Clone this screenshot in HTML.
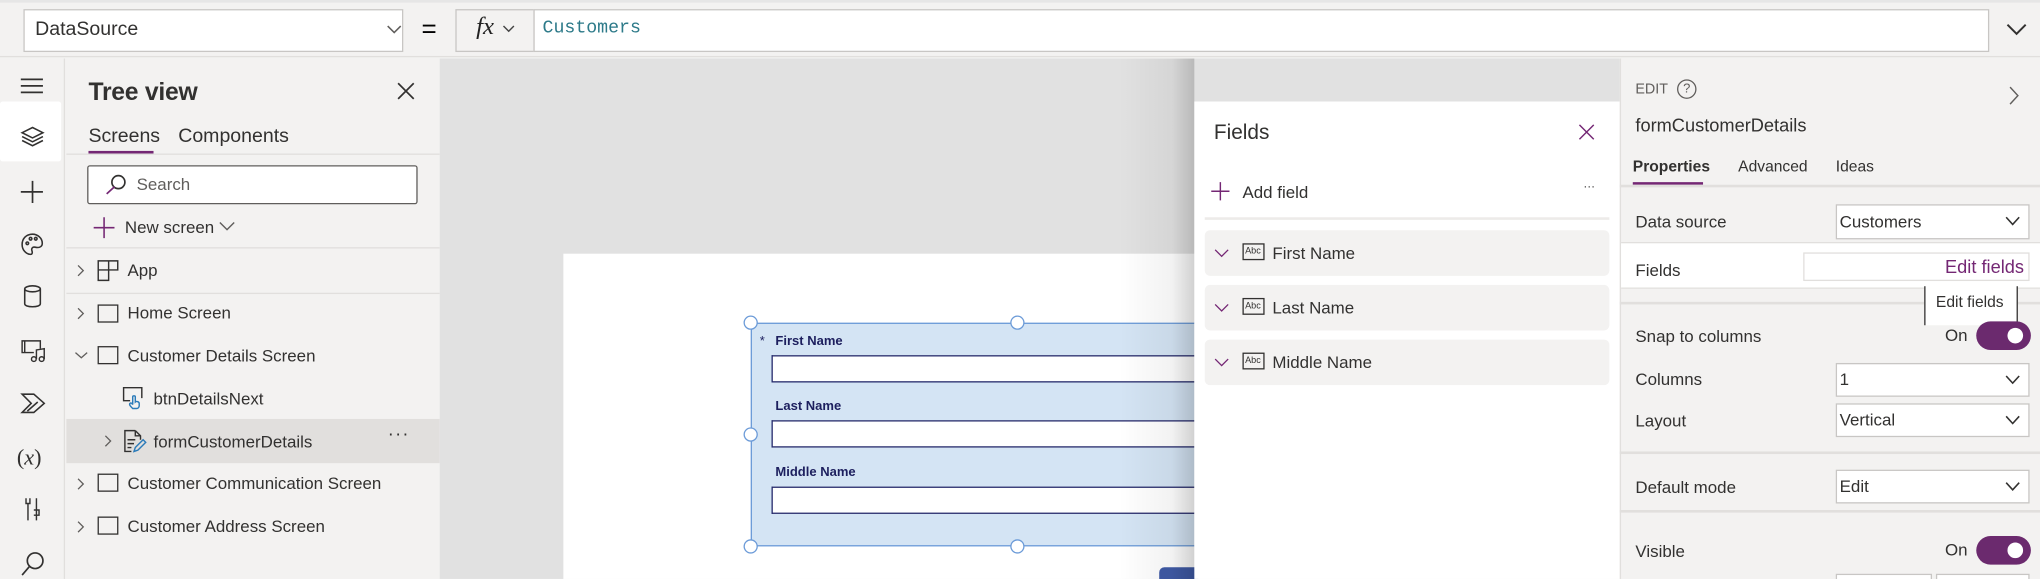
<!DOCTYPE html>
<html><head><meta charset="utf-8">
<style>
*{box-sizing:border-box;margin:0;padding:0}
html,body{width:2040px;height:579px;overflow:hidden;background:#f3f2f1}
#w{position:absolute;left:0;top:0;width:1568px;height:445px;transform:scale(1.30102);transform-origin:0 0;font-family:"Liberation Sans",sans-serif;color:#323130;overflow:hidden}
.a{position:absolute}
.t{position:absolute;white-space:nowrap;line-height:1}
svg{position:absolute;overflow:visible}
.dd{position:absolute;background:#fff;border:1px solid #c8c6c4}
.lbl{font-size:13px;color:#323130}
</style></head><body><div id="w">
<!-- top bar -->
<div class="a" style="left:0;top:0;width:1568px;height:44px;background:#f3f2f1;border-bottom:1px solid #e1dfdd"></div>
<div class="a" style="left:0;top:0;width:1568px;height:2px;background:#e6e6e6"></div>
<div class="a" style="left:18px;top:7px;width:292px;height:33px;background:#fff;border:1px solid #c8c6c4"></div>
<div class="t" style="left:27px;top:15px;font-size:15px;color:#323130">DataSource</div>
<svg style="left:297px;top:19px" width="12" height="8"><path d="M1 1l5 5 5-5" fill="none" stroke="#605e5c" stroke-width="1.2"/></svg>
<div class="t" style="left:324px;top:13px;font-size:20px;color:#000">=</div>
<div class="a" style="left:350px;top:7px;width:61px;height:33px;background:#f3f2f1;border:1px solid #c8c6c4"></div>
<div class="t" style="left:366px;top:11px;font-size:19px;font-style:italic;font-family:'Liberation Serif',serif;color:#222">fx</div>
<svg style="left:386px;top:19px" width="10" height="6"><path d="M1 1l4 4 4-4" fill="none" stroke="#444" stroke-width="1.1"/></svg>
<div class="a" style="left:410px;top:7px;width:1119px;height:33px;background:#fff;border:1px solid #c8c6c4"></div>
<div class="t" style="left:417px;top:15px;font-size:14px;font-family:'Liberation Mono',monospace;color:#2d7a89">Customers</div>
<svg style="left:1542px;top:18px" width="16" height="9"><path d="M1 1l7 7 7-7" fill="none" stroke="#323130" stroke-width="1.5"/></svg>
<!-- left rail -->
<div class="a" style="left:0;top:45px;width:50px;height:400px;background:#f3f2f1;border-right:1px solid #e1dfdd"></div>
<div class="a" style="left:0;top:78px;width:47px;height:46px;background:#fff;border-radius:2px"></div>
<svg style="left:16px;top:60px" width="18" height="14"><path d="M0 1h17M0 6h17M0 11h17" stroke="#323130" stroke-width="1.3"/></svg>
<svg style="left:16px;top:97px" width="18" height="16" fill="none" stroke="#323130" stroke-width="1.2"><path d="M9 1l8 4-8 4-8-4z"/><path d="M1 8l8 4 8-4M1 11l8 4 8-4"/></svg>
<svg style="left:16px;top:139px" width="18" height="18"><path d="M9 0v17M0 8.5h17" stroke="#323130" stroke-width="1.3"/></svg>
<svg style="left:16px;top:179px" width="18" height="18" fill="none" stroke="#323130" stroke-width="1.2"><path d="M9 1C4 1 1 4.5 1 9c0 4 3 7.5 6.5 7.5 1.5 0 1.5-1.5 1-3s.5-3 2.5-2.5 5.5.5 5.5-3C16.5 4 13 1 9 1z"/><circle cx="5" cy="8" r="1"/><circle cx="7.5" cy="4.5" r="1"/><circle cx="11.5" cy="4.5" r="1"/></svg>
<svg style="left:18px;top:219px" width="14" height="18" fill="none" stroke="#323130" stroke-width="1.2"><ellipse cx="7" cy="3" rx="6" ry="2.3"/><path d="M1 3v11.5c0 1.5 2.7 2.3 6 2.3s6-.8 6-2.3V3"/></svg>
<svg style="left:16px;top:261px" width="20" height="18" fill="none" stroke="#323130" stroke-width="1.1"><path d="M10 10H1V1h14v6M3 1v9"/><circle cx="10" cy="15" r="1.8"/><circle cx="16" cy="15" r="1.8"/><path d="M12 15V8l6-1v8"/></svg>
<svg style="left:16px;top:302px" width="19" height="16" fill="none" stroke="#323130" stroke-width="1.2"><path d="M1 1h9l8 7-8 7H1l7-7z"/><path d="M5 14l8-7"/></svg>
<div class="t" style="left:13px;top:343px;font-size:17px;font-family:'Liberation Serif',serif;color:#323130">(<i>x</i>)</div>
<svg style="left:18px;top:382px" width="14" height="20" fill="none" stroke="#323130" stroke-width="1.1"><path d="M2 1v4h3V1M3.5 5v13M10 1v17M8 10h4v4H8"/></svg>
<svg style="left:16px;top:424px" width="18" height="20" fill="none" stroke="#323130" stroke-width="1.3"><circle cx="11" cy="7" r="6"/><path d="M7 11L1 18"/></svg>
<!-- tree panel -->
<div class="a" style="left:51px;top:45px;width:287px;height:400px;background:#f3f2f1"></div>
<div class="t" style="left:68px;top:62px;font-size:19px;font-weight:bold;color:#323130;letter-spacing:-.2px">Tree view</div>
<svg style="left:306px;top:64px" width="13" height="13"><path d="M0 0l12 12M12 0L0 12" stroke="#323130" stroke-width="1.3"/></svg>
<div class="t" style="left:68px;top:97px;font-size:15px;color:#323130">Screens</div>
<div class="t" style="left:137px;top:97px;font-size:15px;color:#323130">Components</div>
<div class="a" style="left:68px;top:116px;width:50px;height:2px;background:#742774"></div>
<div class="a" style="left:51px;top:118px;width:287px;height:1px;background:#e1dfdd"></div>
<div class="a" style="left:67px;top:127px;width:254px;height:30px;background:#fff;border:1px solid #605e5c;border-radius:2px"></div>
<svg style="left:81px;top:134px" width="16" height="16" fill="none" stroke-width="1.3"><circle cx="10" cy="6" r="5" stroke="#323130"/><path d="M7 9.5L1 15" stroke="#742774"/></svg>
<div class="t" style="left:105px;top:135px;font-size:13px;color:#605e5c">Search</div>
<svg style="left:72px;top:167px" width="16" height="16"><path d="M8 0v16M0 8h16" stroke="#742774" stroke-width="1.2"/></svg>
<div class="t" style="left:96px;top:168px;font-size:13px">New screen</div>
<svg style="left:168px;top:170px" width="13" height="8"><path d="M1 1l5.5 5.5L12 1" fill="none" stroke="#605e5c" stroke-width="1.1"/></svg>
<div class="a" style="left:51px;top:190px;width:287px;height:1px;background:#e1dfdd"></div>
<div class="a" style="left:51px;top:225px;width:287px;height:1px;background:#e1dfdd"></div>
<div class="a" style="left:51px;top:322px;width:287px;height:34px;background:#e1dfdd"></div>
<!-- tree rows -->
<svg style="left:59px;top:203px" width="6" height="10"><path d="M1 1l4 4-4 4" fill="none" stroke="#605e5c"/></svg>
<svg style="left:75px;top:200px" width="16" height="16" fill="none" stroke="#323130" stroke-width="1.1"><path d="M.5.5h15v7h-7v8h-8zM.5 7.5h8M8.5.5v7"/></svg>
<div class="t" style="left:98px;top:201px;font-size:13px">App</div>
<svg style="left:59px;top:236px" width="6" height="10"><path d="M1 1l4 4-4 4" fill="none" stroke="#605e5c"/></svg>
<div class="a" style="left:75px;top:234px;width:16px;height:14px;border:1.3px solid #323130"></div>
<div class="t" style="left:98px;top:234px;font-size:13px">Home Screen</div>
<svg style="left:57px;top:270px" width="11" height="6"><path d="M1 1l4.5 4L10 1" fill="none" stroke="#605e5c"/></svg>
<div class="a" style="left:75px;top:266px;width:16px;height:14px;border:1.3px solid #323130"></div>
<div class="t" style="left:98px;top:267px;font-size:13px">Customer Details Screen</div>
<svg style="left:94px;top:297px" width="18" height="18" fill="none" stroke-width="1.1"><path d="M6 11H1V1h14v8" stroke="#323130"/><path d="M8 17c-2-2-3-3-2-4s2 1 2 1V8c0-1 2-1 2 0v4c1-1 3 0 3 1v2c0 1-1 2-2 2z" stroke="#2b7bb9"/></svg>
<div class="t" style="left:118px;top:300px;font-size:13px">btnDetailsNext</div>
<svg style="left:80px;top:334px" width="6" height="10"><path d="M1 1l4 4-4 4" fill="none" stroke="#605e5c"/></svg>
<svg style="left:95px;top:330px" width="17" height="18" fill="none" stroke-width="1.1"><path d="M9 1H1v16h5M9 1l4 4v3M9 1v4h4" stroke="#323130"/><path d="M3 8h6M3 11h5M3 14h3" stroke="#323130"/><path d="M8 17l1-3 6-6 2 2-6 6z" stroke="#2b7bb9"/></svg>
<div class="t" style="left:118px;top:333px;font-size:13px">formCustomerDetails</div>
<div class="t" style="left:298px;top:326px;font-size:14px;letter-spacing:1px">···</div>
<svg style="left:59px;top:367px" width="6" height="10"><path d="M1 1l4 4-4 4" fill="none" stroke="#605e5c"/></svg>
<div class="a" style="left:75px;top:364px;width:16px;height:14px;border:1.3px solid #323130"></div>
<div class="t" style="left:98px;top:365px;font-size:13px">Customer Communication Screen</div>
<svg style="left:59px;top:400px" width="6" height="10"><path d="M1 1l4 4-4 4" fill="none" stroke="#605e5c"/></svg>
<div class="a" style="left:75px;top:397px;width:16px;height:14px;border:1.3px solid #323130"></div>
<div class="t" style="left:98px;top:398px;font-size:13px">Customer Address Screen</div>
<!-- canvas -->
<div class="a" style="left:338px;top:45px;width:907px;height:400px;background:#e1e1e1"></div>
<div class="a" style="left:433px;top:195px;width:485px;height:250px;background:#fff"></div>
<div class="a" style="left:577px;top:248px;width:341px;height:172px;background:#d4e4f4;border:1px solid #6c9bd8;border-right:none"></div>
<div class="t" style="left:584px;top:258px;font-size:10px;color:#1d1f5e">*</div>
<div class="t" style="left:596px;top:258px;font-size:10px;font-weight:bold;color:#1d1f5e">First Name</div>
<div class="a" style="left:593px;top:273px;width:325px;height:21px;background:#fff;border:1.5px solid #252a6b;border-right:none"></div>
<div class="t" style="left:596px;top:308px;font-size:10px;font-weight:bold;color:#1d1f5e">Last Name</div>
<div class="a" style="left:593px;top:323px;width:325px;height:21px;background:#fff;border:1.5px solid #252a6b;border-right:none"></div>
<div class="t" style="left:596px;top:359px;font-size:10px;font-weight:bold;color:#1d1f5e">Middle Name</div>
<div class="a" style="left:593px;top:374px;width:325px;height:21px;background:#fff;border:1.5px solid #252a6b;border-right:none"></div>
<svg style="left:0;top:0" width="1" height="1"><g fill="#fff" stroke="#6c9bd8" stroke-width="1"><circle cx="577" cy="248" r="5"/><circle cx="782" cy="248" r="5"/><circle cx="577" cy="334" r="5"/><circle cx="577" cy="420" r="5"/><circle cx="782" cy="420" r="5"/></g></svg>
<div class="a" style="left:891px;top:436px;width:30px;height:12px;background:#3f5aa6;border-radius:4px 0 0 0"></div>
<div class="a" style="left:860px;top:45px;width:58px;height:400px;background:linear-gradient(90deg,rgba(0,0,0,0),rgba(0,0,0,.05) 70%,rgba(0,0,0,.18))"></div>
<!-- fields panel -->
<div class="a" style="left:918px;top:78px;width:327px;height:367px;background:#fff"></div>
<div class="t" style="left:933px;top:95px;font-size:16px;color:#323130">Fields</div>
<svg style="left:1214px;top:96px" width="12" height="12"><path d="M0 0l11 11M11 0L0 11" stroke="#742774" stroke-width="1.1"/></svg>
<svg style="left:931px;top:140px" width="14" height="14"><path d="M7 0v14M0 7h14" stroke="#742774" stroke-width="1.1"/></svg>
<div class="t" style="left:955px;top:141px;font-size:13px">Add field</div>
<div class="t" style="left:1217px;top:139px;font-size:9px">···</div>
<div class="a" style="left:926px;top:167px;width:311px;height:2px;background:#edebe9"></div>
<div class="a" style="left:926px;top:177px;width:311px;height:35px;background:#f3f2f1;border-radius:4px"></div>
<div class="a" style="left:926px;top:219px;width:311px;height:35px;background:#f3f2f1;border-radius:4px"></div>
<div class="a" style="left:926px;top:261px;width:311px;height:35px;background:#f3f2f1;border-radius:4px"></div>
<svg style="left:933px;top:191px" width="12" height="7"><path d="M1 1l5 5 5-5" fill="none" stroke="#742774"/></svg>
<svg style="left:933px;top:233px" width="12" height="7"><path d="M1 1l5 5 5-5" fill="none" stroke="#742774"/></svg>
<svg style="left:933px;top:275px" width="12" height="7"><path d="M1 1l5 5 5-5" fill="none" stroke="#742774"/></svg>
<div class="a" style="left:955px;top:187px;width:17px;height:13px;border:1px solid #323130;font-size:7px;line-height:11px;padding-left:1px">Abc</div>
<div class="a" style="left:955px;top:229px;width:17px;height:13px;border:1px solid #323130;font-size:7px;line-height:11px;padding-left:1px">Abc</div>
<div class="a" style="left:955px;top:271px;width:17px;height:13px;border:1px solid #323130;font-size:7px;line-height:11px;padding-left:1px">Abc</div>
<div class="t" style="left:978px;top:188px;font-size:13px">First Name</div>
<div class="t" style="left:978px;top:230px;font-size:13px">Last Name</div>
<div class="t" style="left:978px;top:272px;font-size:13px">Middle Name</div>
<!-- right panel -->
<div class="a" style="left:1245px;top:45px;width:323px;height:400px;background:#f3f2f1;border-left:1px solid #e1dfdd"></div>
<div class="t" style="left:1257px;top:64px;font-size:11px;color:#605e5c">EDIT</div>
<div class="a" style="left:1289px;top:61px;width:15px;height:15px;border:1.2px solid #605e5c;border-radius:50%;font-size:10px;text-align:center;line-height:13px;color:#605e5c">?</div>
<svg style="left:1544px;top:66px" width="8" height="15"><path d="M1 1l6 6.5L1 14" fill="none" stroke="#605e5c" stroke-width="1.1"/></svg>
<div class="t" style="left:1257px;top:89px;font-size:14px">formCustomerDetails</div>
<div class="t" style="left:1255px;top:122px;font-size:12px;font-weight:bold">Properties</div>
<div class="t" style="left:1336px;top:122px;font-size:12px">Advanced</div>
<div class="t" style="left:1411px;top:122px;font-size:12px">Ideas</div>
<div class="a" style="left:1255px;top:140px;width:54px;height:2px;background:#742774"></div>
<div class="a" style="left:1245px;top:142px;width:323px;height:2px;background:#e1dfdd"></div>
<div class="t lbl" style="left:1257px;top:164px">Data source</div>
<div class="dd" style="left:1411px;top:157px;width:149px;height:27px"></div>
<div class="t" style="left:1414px;top:164px;font-size:13px">Customers</div>
<div class="a" style="left:1246px;top:186px;width:322px;height:36px;background:#fff;border-top:1px solid #e1dfdd;border-bottom:1px solid #e1dfdd"></div>
<div class="t lbl" style="left:1257px;top:201px">Fields</div>
<div class="a" style="left:1386px;top:194px;width:174px;height:22px;background:#fff;border:1px solid #e1dfdd"></div>
<div class="t" style="left:1495px;top:198px;font-size:14px;color:#742774">Edit fields</div>
<div class="a" style="left:1245px;top:232px;width:323px;height:2px;background:#e1dfdd"></div>
<div class="a" style="left:1479px;top:220px;width:72px;height:30px;background:#fff;border:1px solid #323130;border-top:none;border-bottom:none"></div>
<div class="t" style="left:1488px;top:226px;font-size:12px">Edit fields</div>
<div class="t lbl" style="left:1257px;top:252px">Snap to columns</div>
<div class="t lbl" style="left:1495px;top:251px">On</div>
<div class="a" style="left:1519px;top:247px;width:42px;height:22px;border-radius:11px;background:#6b2a6e"></div>
<div class="a" style="left:1543px;top:252px;width:12px;height:12px;border-radius:50%;background:#fff"></div>
<div class="t lbl" style="left:1257px;top:285px">Columns</div>
<div class="dd" style="left:1411px;top:279px;width:149px;height:26px"></div>
<div class="t" style="left:1414px;top:285px;font-size:13px">1</div>
<div class="t lbl" style="left:1257px;top:317px">Layout</div>
<div class="dd" style="left:1411px;top:310px;width:149px;height:26px"></div>
<div class="t" style="left:1414px;top:316px;font-size:13px">Vertical</div>
<div class="a" style="left:1245px;top:347px;width:323px;height:2px;background:#e1dfdd"></div>
<div class="t lbl" style="left:1257px;top:368px">Default mode</div>
<div class="dd" style="left:1411px;top:361px;width:149px;height:26px"></div>
<div class="t" style="left:1414px;top:367px;font-size:13px">Edit</div>
<div class="a" style="left:1245px;top:392px;width:323px;height:2px;background:#e1dfdd"></div>
<div class="t lbl" style="left:1257px;top:417px">Visible</div>
<div class="t lbl" style="left:1495px;top:416px">On</div>
<div class="a" style="left:1519px;top:412px;width:42px;height:22px;border-radius:11px;background:#6b2a6e"></div>
<div class="a" style="left:1543px;top:417px;width:12px;height:12px;border-radius:50%;background:#fff"></div>
<div class="dd" style="left:1411px;top:441px;width:74px;height:10px"></div>
<div class="dd" style="left:1488px;top:441px;width:72px;height:10px"></div>
<svg style="left:1541px;top:166px" width="12" height="8"><path d="M1 1l5 5.5L11 1" fill="none" stroke="#323130" stroke-width="1.2"/></svg>
<svg style="left:1541px;top:288px" width="12" height="8"><path d="M1 1l5 5.5L11 1" fill="none" stroke="#323130" stroke-width="1.2"/></svg>
<svg style="left:1541px;top:319px" width="12" height="8"><path d="M1 1l5 5.5L11 1" fill="none" stroke="#323130" stroke-width="1.2"/></svg>
<svg style="left:1541px;top:370px" width="12" height="8"><path d="M1 1l5 5.5L11 1" fill="none" stroke="#323130" stroke-width="1.2"/></svg>
</div></body></html>
